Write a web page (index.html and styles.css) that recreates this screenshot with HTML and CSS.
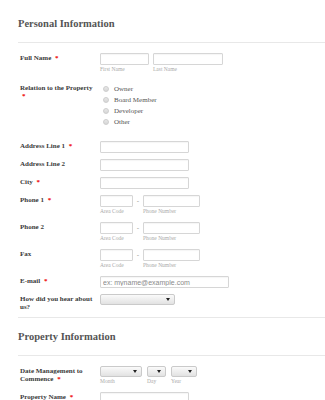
FILE: index.html
```html
<!DOCTYPE html>
<html lang="en">
<head>
    <meta charset="UTF-8">
    <meta name="viewport" content="width=device-width, initial-scale=1.0">
    <title>Property Management Inquiry</title>
    <link rel="stylesheet" href="styles.css">
</head>
<body>
    <div class="form">
        <section class="section">
            <div class="section-head">
                <h2>Personal Information</h2>
            </div>
            <ul class="fields">
                <li class="field">
                    <label class="field-label">Full Name <span class="req">*</span></label>
                    <div class="field-input">
                        <div class="sub">
                            <input class="text w-first" type="text">
                            <span class="sublabel">First Name</span>
                        </div>
                        <div class="sub">
                            <input class="text w-last" type="text">
                            <span class="sublabel">Last Name</span>
                        </div>
                    </div>
                </li>

                <li class="field field-radio">
                    <label class="field-label">Relation to the Property <span class="req">*</span></label>
                    <div class="radios">
                        <div class="radio-item"><span class="radio"></span>Owner</div>
                        <div class="radio-item"><span class="radio"></span>Board Member</div>
                        <div class="radio-item"><span class="radio"></span>Developer</div>
                        <div class="radio-item"><span class="radio"></span>Other</div>
                    </div>
                </li>

                <li class="field">
                    <label class="field-label">Address Line 1 <span class="req">*</span></label>
                    <input class="text w-address" type="text">
                </li>

                <li class="field">
                    <label class="field-label">Address Line 2</label>
                    <input class="text w-address" type="text">
                </li>

                <li class="field">
                    <label class="field-label">City <span class="req">*</span></label>
                    <input class="text w-address" type="text">
                </li>

                <li class="field">
                    <label class="field-label">Phone 1 <span class="req">*</span></label>
                    <div class="field-input">
                        <div class="sub">
                            <input class="text w-area" type="text">
                            <span class="sublabel">Area Code</span>
                        </div>
                        <span class="dash">-</span>
                        <div class="sub">
                            <input class="text w-phone" type="text">
                            <span class="sublabel">Phone Number</span>
                        </div>
                    </div>
                </li>

                <li class="field">
                    <label class="field-label">Phone 2</label>
                    <div class="field-input">
                        <div class="sub">
                            <input class="text w-area" type="text">
                            <span class="sublabel">Area Code</span>
                        </div>
                        <span class="dash">-</span>
                        <div class="sub">
                            <input class="text w-phone" type="text">
                            <span class="sublabel">Phone Number</span>
                        </div>
                    </div>
                </li>

                <li class="field">
                    <label class="field-label">Fax</label>
                    <div class="field-input">
                        <div class="sub">
                            <input class="text w-area" type="text">
                            <span class="sublabel">Area Code</span>
                        </div>
                        <span class="dash">-</span>
                        <div class="sub">
                            <input class="text w-phone" type="text">
                            <span class="sublabel">Phone Number</span>
                        </div>
                    </div>
                </li>

                <li class="field">
                    <label class="field-label">E-mail <span class="req">*</span></label>
                    <input class="text w-email" type="text" placeholder="ex: myname@example.com">
                </li>

                <li class="field">
                    <label class="field-label">How did you hear about us?</label>
                    <span class="dropdown w-how"><span class="arrow"></span></span>
                </li>
            </ul>
        </section>

        <section class="section">
            <div class="section-head section-head-line">
                <h2>Property Information</h2>
            </div>
            <ul class="fields">
                <li class="field">
                    <label class="field-label">Date Management to Commence <span class="req">*</span></label>
                    <div class="field-input">
                        <div class="sub">
                            <span class="dropdown w-month"><span class="arrow"></span></span>
                            <span class="sublabel">Month</span>
                        </div>
                        <div class="sub">
                            <span class="dropdown w-day"><span class="arrow"></span></span>
                            <span class="sublabel">Day</span>
                        </div>
                        <div class="sub">
                            <span class="dropdown w-year"><span class="arrow"></span></span>
                            <span class="sublabel">Year</span>
                        </div>
                    </div>
                </li>

                <li class="field">
                    <label class="field-label">Property Name <span class="req">*</span></label>
                    <input class="text w-address" type="text">
                </li>
            </ul>
        </section>
    </div>
</body>
</html>
```

FILE: styles.css
```css
* {
    box-sizing: border-box;
}

body {
    margin: 0;
    padding: 5px 0 0 18px;
    background: #fff;
    font-family: 'Liberation Serif', 'Times New Roman', serif;
    color: #555;
}

.section-head {
    padding: 12px 0 11px;
    border-bottom: 1px solid #e8e8e8;
}

.section-head-line {
    border-top: 1px solid #e8e8e8;
}

.section-head h2 {
    margin: 0;
    font-size: 10.5px;
    line-height: 14px;
    font-weight: 700;
    color: #555;
}

.fields {
    list-style: none;
    margin: 0;
    padding: 10px 0 0;
}

.field {
    display: flex;
    align-items: flex-start;
    margin-bottom: 6px;
}

.field-label {
    width: 76px;
    margin-right: 6px;
    padding: 1px 0 0 2px;
    flex-shrink: 0;
    font-size: 7px;
    line-height: 8px;
    font-weight: 700;
    color: #3a3a3a;
}

.req {
    color: #e00;
    margin-left: 2px;
}

.field-input {
    display: flex;
    align-items: flex-start;
}

.sub {
    display: flex;
    flex-direction: column;
    margin-right: 4px;
}

.sublabel {
    height: 9px;
    font-size: 5.5px;
    line-height: 9px;
    color: #aaa;
}

.text {
    height: 12px;
    margin: 0;
    padding: 0 2px;
    border: 1px solid #d6d6d6;
    border-radius: 1px;
    background: #fff;
    box-shadow: inset 0 1px 1px rgba(0, 0, 0, 0.04);
    font-family: 'Liberation Sans', Arial, sans-serif;
    font-size: 7px;
    color: #555;
}

.text::placeholder {
    color: #8a8a8a;
}

.w-first { width: 49px; }
.w-last { width: 70px; }
.w-address { width: 89px; }
.w-area { width: 33px; }
.w-phone { width: 57px; }
.w-email { width: 129px; }

.dash {
    width: 10px;
    margin-left: -4px;
    text-align: center;
    font-size: 7px;
    line-height: 12px;
    color: #888;
}

/* Radio list */
.field-radio {
    padding: 3px 0 8px;
}

.radio-item {
    display: flex;
    align-items: center;
    height: 11px;
    font-size: 7px;
    color: #555;
}

.radio {
    width: 6px;
    height: 6px;
    margin: 0 5px 0 3px;
    border-radius: 50%;
    border: 1px solid #cdcdcd;
    background: linear-gradient(#e8e8e8, #d6d6d6);
}

/* Dropdowns */
.dropdown {
    display: flex;
    align-items: center;
    justify-content: flex-end;
    height: 11px;
    padding-right: 4px;
    border: 1px solid #cacaca;
    border-radius: 2px;
    background: linear-gradient(#fafafa, #e2e2e2);
}

.arrow {
    width: 0;
    height: 0;
    border-left: 2px solid transparent;
    border-right: 2px solid transparent;
    border-top: 3px solid #222;
}

.w-how { width: 75px; }
.w-month { width: 42px; }
.w-day { width: 19px; }
.w-year { width: 26px; }

.w-month,
.w-day {
    margin-right: 1px;
}
```
